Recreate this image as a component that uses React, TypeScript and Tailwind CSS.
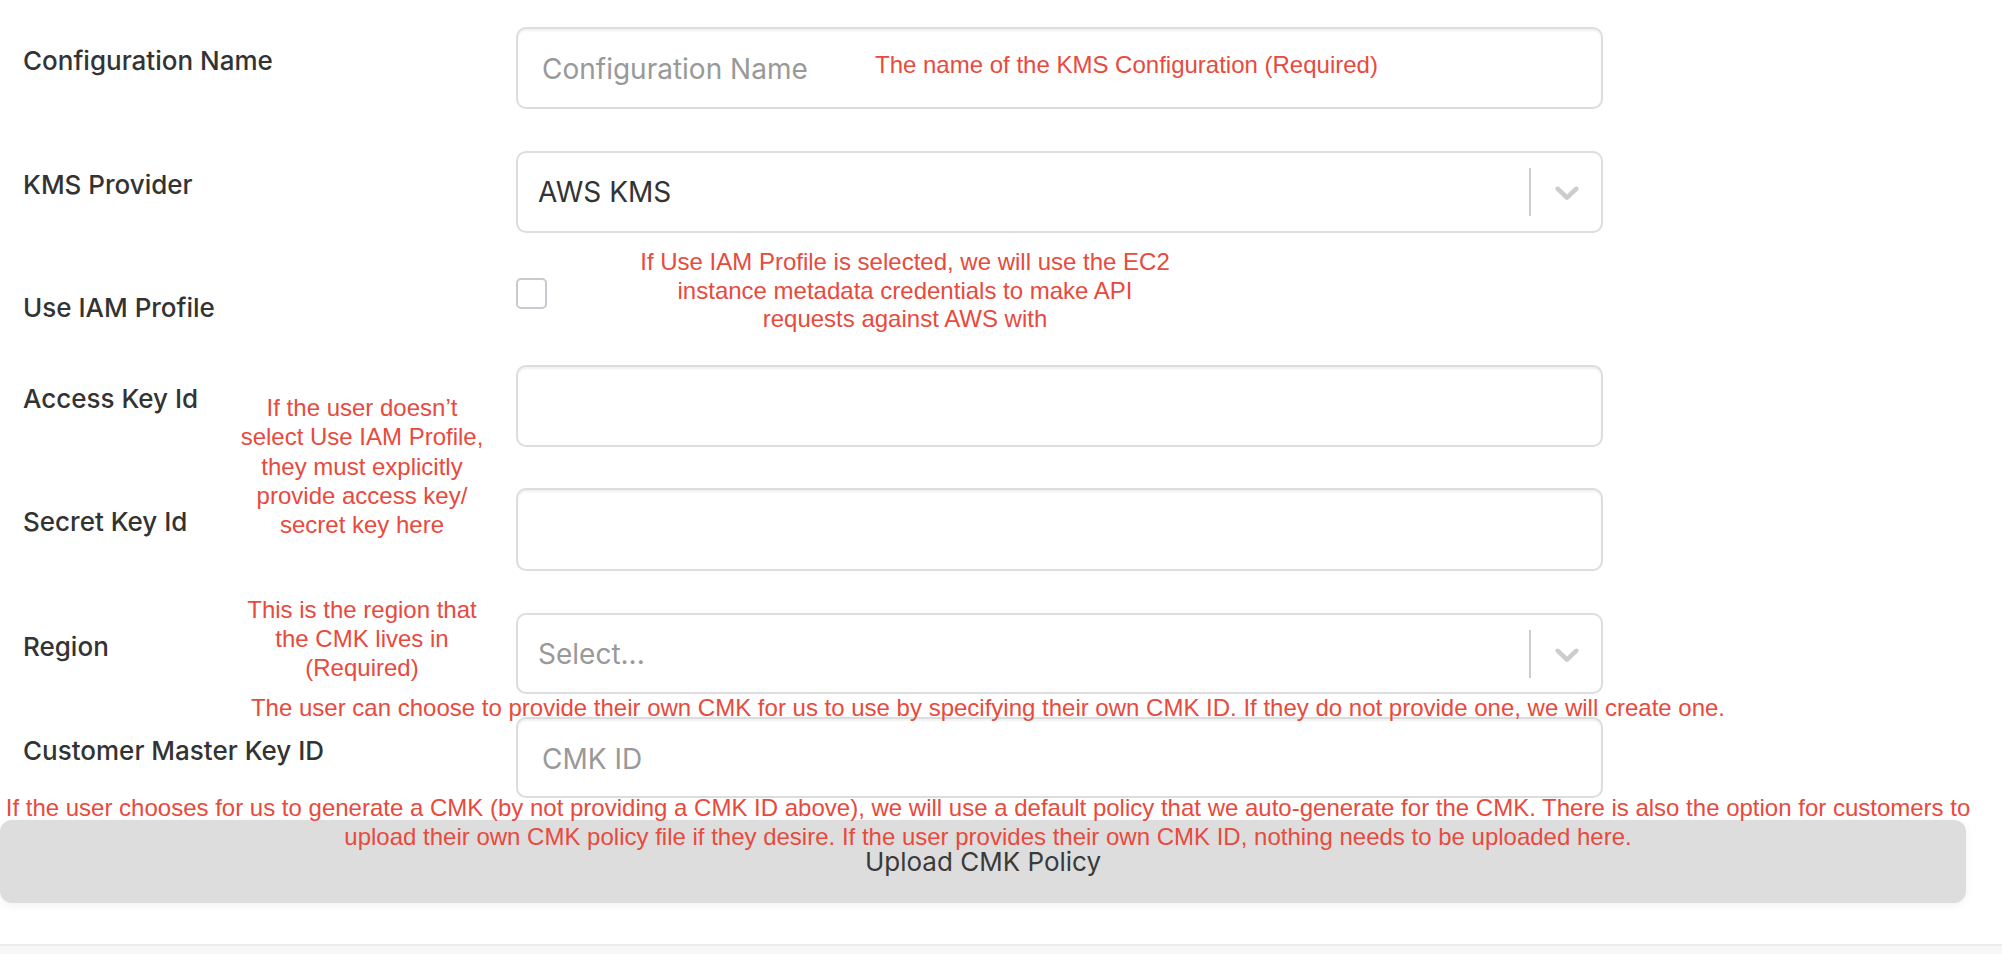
import React from "react";

const RED = "text-[#e84a3d]";
const NOTE = "absolute font-['Liberation_Sans',Arial,sans-serif] text-[24px] text-[#e84a3d]";

function Chevron() {
  return (
    <svg viewBox="0 0 20 20" className="h-[40px] w-[40px] fill-[#cccccc]">
      <path d="M4.516 7.548c0.436-0.446 1.043-0.481 1.576 0l3.908 3.747 3.908-3.747c0.533-0.481 1.141-0.446 1.574 0 0.436 0.445 0.408 1.197 0 1.615-0.406 0.418-4.695 4.502-4.695 4.502-0.217 0.223-0.502 0.335-0.787 0.335s-0.57-0.112-0.789-0.335c0 0-4.287-4.084-4.695-4.502s-0.436-1.17 0-1.615z" />
    </svg>
  );
}

function Label({ children }: { children: React.ReactNode }) {
  return (
    <div className="w-[493px] shrink-0 pt-[17px] text-[26px] font-medium leading-[34px] text-[#333333]">
      {children}
    </div>
  );
}

function TextInput({ placeholder, h = "h-[82px]" }: { placeholder?: string; h?: string }) {
  return (
    <div
      className={`flex w-[1087px] items-center rounded-[10px] border-2 border-[#dddddd] bg-white px-[24px] shadow-[inset_0_2px_2px_rgba(0,0,0,0.06)] ${h}`}
    >
      <span className="pt-[2px] text-[28px] text-[#999999]">{placeholder}</span>
    </div>
  );
}

function Select({ value, placeholder, h = "h-[82px]" }: { value?: string; placeholder?: string; h?: string }) {
  return (
    <div
      className={`flex w-[1087px] items-center rounded-[10px] border-2 border-[#dddddd] bg-white pl-[20px] pr-[14px] ${h}`}
    >
      <span className={`flex-1 text-[28px] ${value ? "text-[#333333]" : "text-[#999999]"}`}>
        {value ?? placeholder}
      </span>
      <span className="h-[48px] w-[2px] bg-[#cccccc]" />
      <span className="ml-[16px]">
        <Chevron />
      </span>
    </div>
  );
}

export default function App() {
  return (
    <div className="relative h-[954px] w-full overflow-hidden bg-white font-['Inter',sans-serif]">
      <div className="pl-[23px] pt-[27px]">
        <div className="flex">
          <Label>Configuration Name</Label>
          <TextInput placeholder="Configuration Name" />
        </div>

        <div className="mt-[42px] flex">
          <Label>KMS Provider</Label>
          <Select value="AWS KMS" />
        </div>

        <div className="mt-[41px] flex h-[49px]">
          <Label>Use IAM Profile</Label>
          <div className="mt-[4px] h-[31px] w-[31px] rounded-[5px] border-2 border-[#c9c9d1] bg-white" />
        </div>

        <div className="mt-[42px] flex">
          <Label>Access Key Id</Label>
          <TextInput />
        </div>

        <div className="mt-[41px] flex">
          <Label>Secret Key Id</Label>
          <TextInput h="h-[83px]" />
        </div>

        <div className="mt-[42px] flex">
          <Label>Region</Label>
          <Select placeholder="Select..." h="h-[81px]" />
        </div>

        <div className="mt-[23px] flex">
          <Label>Customer Master Key ID</Label>
          <TextInput placeholder="CMK ID" h="h-[81px]" />
        </div>
      </div>

      <button className="mt-[22px] flex h-[83px] w-[1966px] items-center justify-center rounded-[12px] bg-[#dddddd] text-[26px] text-[#3a3a3a] shadow-[0_2px_10px_rgba(0,0,0,0.06)]">
        Upload CMK Policy
      </button>

      <div className="mt-[41px] h-[10px] border-t-2 border-[#ececec] bg-[#f7f7f7]" />

      {/* annotations */}
      <div className={`${NOTE} left-[875px] top-[50px] leading-[29px]`}>
        The name of the KMS Configuration (Required)
      </div>

      <div className={`${NOTE} left-[575px] top-[248px] w-[660px] text-center leading-[28.5px]`}>
        If Use IAM Profile is selected, we will use the EC2
        <br />
        instance metadata credentials to make API
        <br />
        requests against AWS with
      </div>

      <div className={`${NOTE} left-[212px] top-[393px] w-[300px] text-center leading-[29.3px]`}>
        If the user doesn’t
        <br />
        select Use IAM Profile,
        <br />
        they must explicitly
        <br />
        provide access key/
        <br />
        secret key here
      </div>

      <div className={`${NOTE} left-[212px] top-[595px] w-[300px] text-center leading-[29px]`}>
        This is the region that
        <br />
        the CMK lives in
        <br />
        (Required)
      </div>

      <div className={`${NOTE} left-[88px] top-[693px] w-[1800px] whitespace-nowrap text-center leading-[29px]`}>
        The user can choose to provide their own CMK for us to use by specifying their own CMK ID. If they do not provide one, we will create one.
      </div>

      <div className={`${NOTE} left-[0px] top-[793px] w-[1976px] whitespace-nowrap text-center leading-[29px] ${RED}`}>
        If the user chooses for us to generate a CMK (by not providing a CMK ID above), we will use a default policy that we auto-generate for the CMK. There is also the option for customers to
        <br />
        upload their own CMK policy file if they desire. If the user provides their own CMK ID, nothing needs to be uploaded here.
      </div>
    </div>
  );
}
